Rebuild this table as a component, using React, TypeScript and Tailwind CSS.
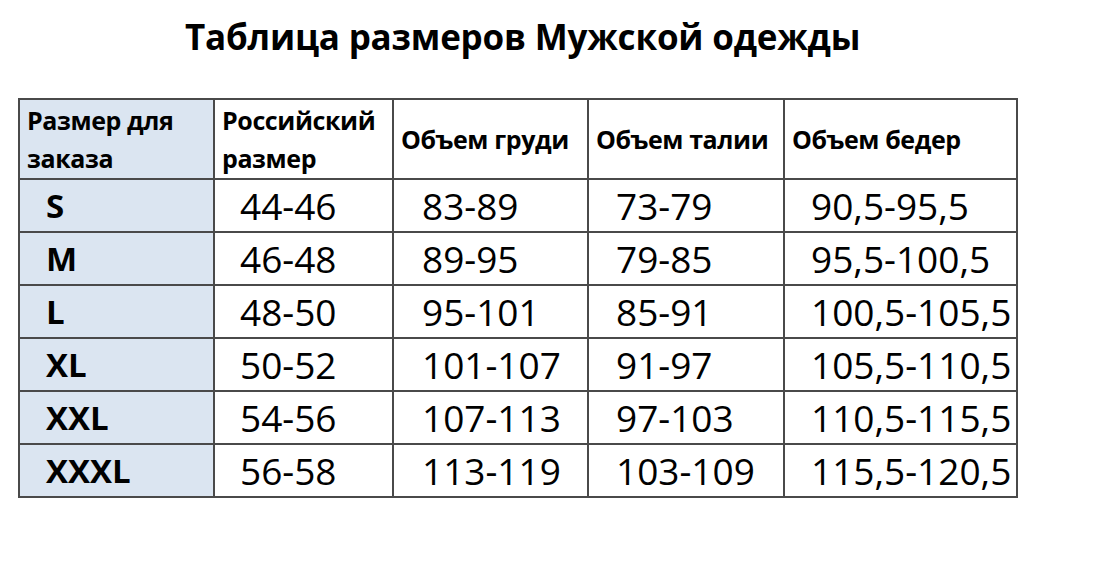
const rows = [
  ["S", "44-46", "83-89", "73-79", "90,5-95,5"],
  ["M", "46-48", "89-95", "79-85", "95,5-100,5"],
  ["L", "48-50", "95-101", "85-91", "100,5-105,5"],
  ["XL", "50-52", "101-107", "91-97", "105,5-110,5"],
  ["XXL", "54-56", "107-113", "97-103", "110,5-115,5"],
  ["XXXL", "56-58", "113-119", "103-109", "115,5-120,5"],
];

const cell = "border-2 border-[#4a4a4a] align-middle";

export default function App() {
  return (
    <div className="h-[581px] w-[1100px] bg-white text-black font-['Open_Sans',sans-serif]">
      <h1 className="pt-[17px] pl-[185px] text-[35px] font-bold leading-[40px] tracking-[-0.2px]">
        Таблица размеров Мужской одежды
      </h1>
      <table className="ml-[18px] mt-[41px] border-collapse">
        <thead>
          <tr className="h-[80px] text-[25px] font-bold leading-[38px] tracking-[-0.4px]">
            <th className={`${cell} w-[195px] bg-[#dbe5f1] pl-[7px] text-left font-bold`}>
              Размер для
              <br />
              заказа
            </th>
            <th className={`${cell} w-[179px] pl-[7px] text-left font-bold`}>
              Российский
              <br />
              размер
            </th>
            <th className={`${cell} w-[195px] pl-[7px] text-left font-bold`}>Объем груди</th>
            <th className={`${cell} w-[196px] pl-[7px] text-left font-bold`}>Объем талии</th>
            <th className={`${cell} w-[233px] pl-[7px] text-left font-bold`}>Объем бедер</th>
          </tr>
        </thead>
        <tbody>
          {rows.map((r) => (
            <tr key={r[0]} className="h-[53px] text-[37px] leading-[40px]">
              <td className={`${cell} bg-[#dbe5f1] pl-[26px] text-[33px] font-bold`}>{r[0]}</td>
              <td className={`${cell} pl-[25px]`}>{r[1]}</td>
              <td className={`${cell} pl-[28px]`}>{r[2]}</td>
              <td className={`${cell} pl-[27px]`}>{r[3]}</td>
              <td className={`${cell} pl-[26px]`}>{r[4]}</td>
            </tr>
          ))}
        </tbody>
      </table>
    </div>
  );
}
